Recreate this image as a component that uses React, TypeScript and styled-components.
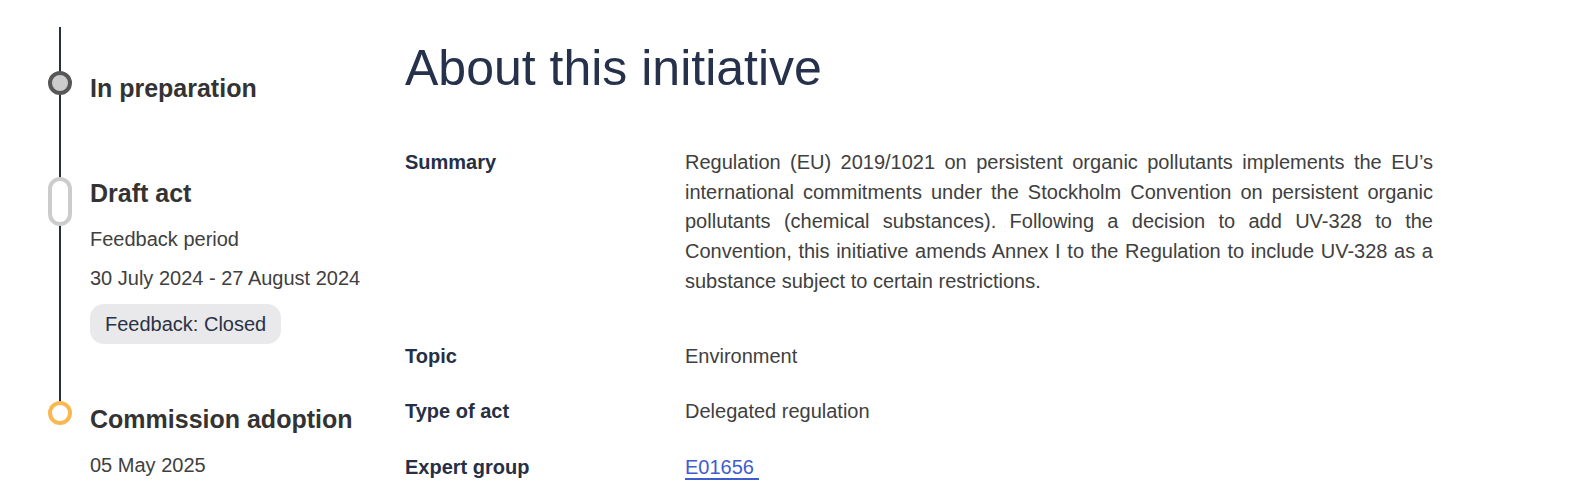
import React from 'react';
import styled, { createGlobalStyle } from 'styled-components';

const GlobalStyle = createGlobalStyle`
  body {
    margin: 0;
    background: #fff;
    font-family: 'Liberation Sans', Arial, sans-serif;
  }
`;

const Page = styled.div`
  display: flex;
  align-items: flex-start;
  padding: 27px 0 0 48px;
`;

const Timeline = styled.div`
  position: relative;
  width: 357px;
  flex-shrink: 0;
  padding: 46px 0 0 42px;
  box-sizing: border-box;
  &::before {
    content: '';
    position: absolute;
    left: 11px;
    top: 0;
    bottom: 70px;
    width: 2px;
    background: #262f40;
  }
`;

const Step = styled.div<{ $gap: number }>`
  position: relative;
  margin-bottom: ${(p) => p.$gap}px;
`;

const markerStyles = {
  done: 'height: 24px; top: -2px; border-color: #575757; background: #cccccc;',
  current: 'height: 49px; top: -1px; border-color: #cccccc; background: #fff;',
  next: 'height: 24px; top: -3px; border-color: #fbb850; background: #fff;'
};

const Marker = styled.span<{ $kind: keyof typeof markerStyles }>`
  position: absolute;
  left: -42px;
  width: 24px;
  box-sizing: border-box;
  border: 4px solid;
  border-radius: 12px;
  z-index: 1;
  ${(p) => markerStyles[p.$kind]}
`;

const StepTitle = styled.h3`
  margin: 0;
  font-size: 25px;
  line-height: 30px;
  font-weight: 700;
  color: #333333;
`;

const Meta = styled.p`
  margin: 0;
  font-size: 20px;
  line-height: 26px;
  color: #404040;
  & + & {
    margin-top: 13px;
  }
  ${StepTitle} + & {
    margin-top: 18px;
  }
`;

const Badge = styled.span`
  display: inline-block;
  margin-top: 13px;
  height: 40px;
  line-height: 40px;
  padding: 0 15px;
  border-radius: 14px;
  background: #e9e9eb;
  color: #2b3245;
  font-size: 20px;
`;

const Main = styled.div`
  padding-top: 12px;
`;

const Heading = styled.h1`
  margin: 0 0 51px;
  font-size: 50px;
  line-height: 58px;
  font-weight: 400;
  color: #26324b;
`;

const Details = styled.dl`
  display: grid;
  grid-template-columns: 280px 748px;
  row-gap: 25.8px;
  margin: 0;
  font-size: 20px;
  line-height: 29.7px;
`;

const Label = styled.dt`
  font-weight: 700;
  color: #262f45;
`;

const Value = styled.dd<{ $long?: boolean }>`
  margin: 0;
  color: #404040;
  text-align: ${(p) => (p.$long ? 'justify' : 'left')};
  padding-bottom: ${(p) => (p.$long ? '19.6px' : '0')};
`;

const Link = styled.a`
  color: #3f5bd0;
  text-decoration: none;
  border-bottom: 2px solid #3f5bd0;
  padding-right: 5px;
`;

const summary =
  'Regulation (EU) 2019/1021 on persistent organic pollutants implements the EU\u2019s international commitments under the Stockholm Convention on persistent organic pollutants (chemical substances). Following a decision to add UV-328 to the Convention, this initiative amends Annex I to the Regulation to include UV-328 as a substance subject to certain restrictions.';

const App: React.FC = () => {
  return (
    <>
      <GlobalStyle />
      <Page>
        <Timeline>
          <Step $gap={75}>
            <Marker $kind="done" />
            <StepTitle>In preparation</StepTitle>
          </Step>
          <Step $gap={60}>
            <Marker $kind="current" />
            <StepTitle>Draft act</StepTitle>
            <Meta>Feedback period</Meta>
            <Meta>30 July 2024 - 27 August 2024</Meta>
            <Badge>Feedback: Closed</Badge>
          </Step>
          <Step $gap={0}>
            <Marker $kind="next" />
            <StepTitle>Commission adoption</StepTitle>
            <Meta>05 May 2025</Meta>
          </Step>
        </Timeline>
        <Main>
          <Heading>About this initiative</Heading>
          <Details>
            <Label>Summary</Label>
            <Value $long>{summary}</Value>
            <Label>Topic</Label>
            <Value>Environment</Value>
            <Label>Type of act</Label>
            <Value>Delegated regulation</Value>
            <Label>Expert group</Label>
            <Value>
              <Link href="#">E01656</Link>
            </Value>
          </Details>
        </Main>
      </Page>
    </>
  );
};

export default App;
